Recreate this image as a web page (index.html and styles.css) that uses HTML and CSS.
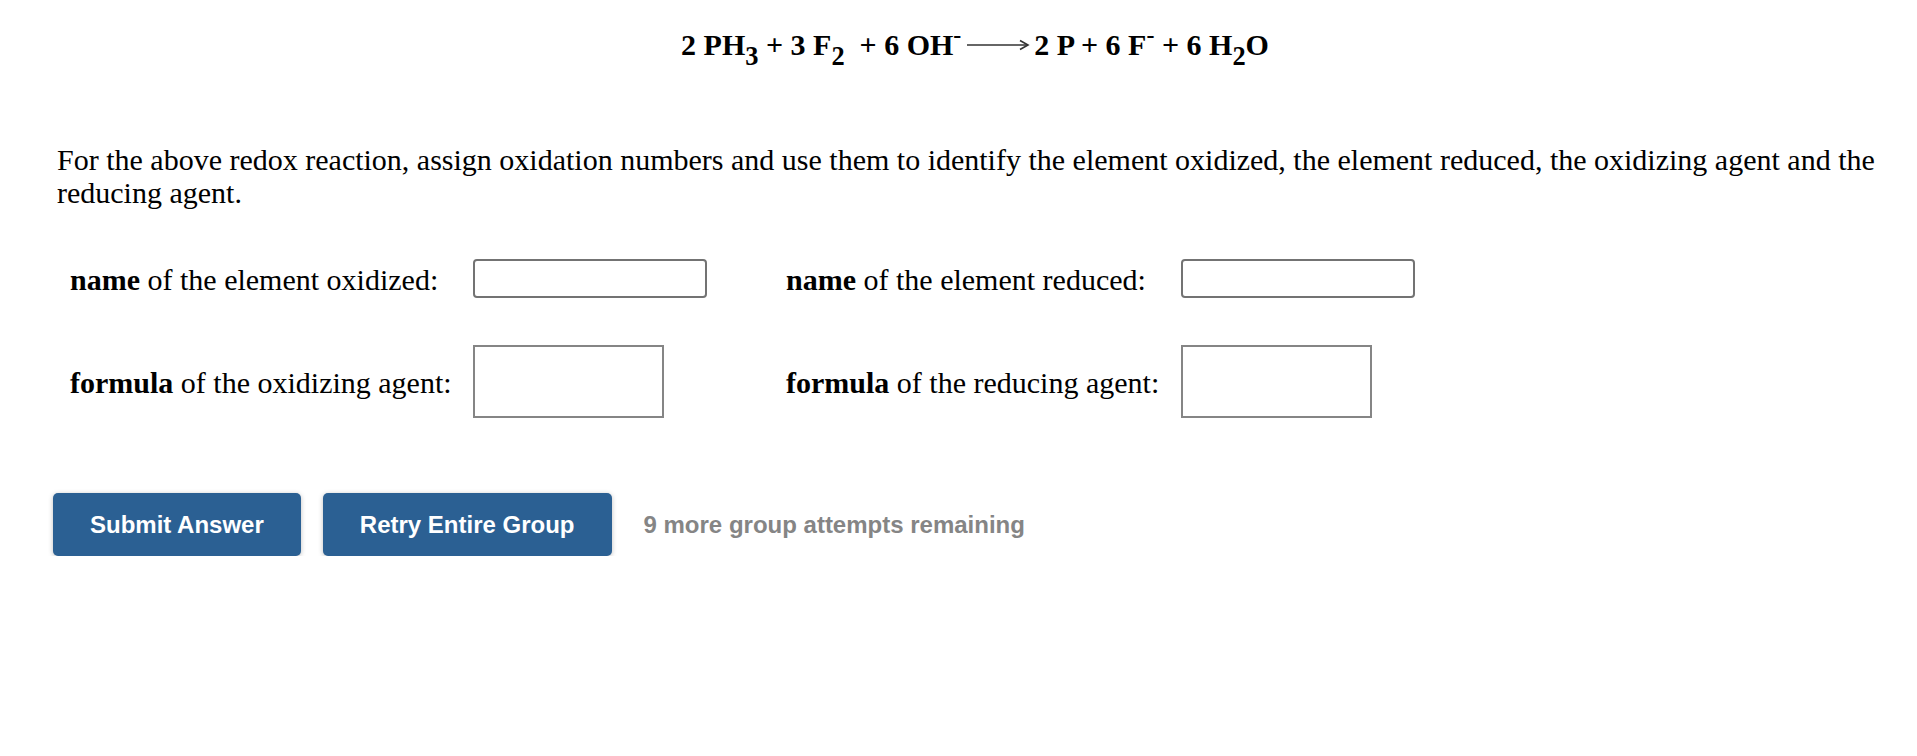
FILE: index.html
```html
<!DOCTYPE html>
<html>
<head>
<meta charset="utf-8">
<link rel="stylesheet" href="styles.css">
</head>
<body>
<div class="page">
  <div class="equation">2 PH<span class="sub">3</span> + 3 F<span class="sub">2</span> &nbsp;+ 6 OH<span class="sup">-</span><svg class="arrow" width="64" height="12" viewBox="0 0 64 12"><line x1="1" y1="6" x2="61" y2="6" stroke="#333" stroke-width="1.6"/><path d="M54 1.5 L62 6 L54 10.5" fill="none" stroke="#333" stroke-width="1.6"/></svg>2 P + 6 F<span class="sup">-</span> + 6 H<span class="sub">2</span>O</div>
  <p class="prompt">For the above redox reaction, assign oxidation numbers and use them to identify the element oxidized, the element reduced, the oxidizing agent and the reducing agent.</p>
  <div class="form">
    <div class="label"><b>name</b> of the element oxidized:</div>
    <div class="cell"><input class="text-input" type="text"></div>
    <div class="label"><b>name</b> of the element reduced:</div>
    <div class="cell"><input class="text-input" type="text"></div>
    <div class="label"><b>formula</b> of the oxidizing agent:</div>
    <div class="cell"><div class="formula-box"></div></div>
    <div class="label"><b>formula</b> of the reducing agent:</div>
    <div class="cell"><div class="formula-box"></div></div>
  </div>
  <div class="actions">
    <button class="btn">Submit Answer</button>
    <button class="btn">Retry Entire Group</button>
    <span class="attempts">9 more group attempts remaining</span>
  </div>
</div>
</body>
</html>
```
FILE: styles.css
```css
html, body {
  margin: 0;
  padding: 0;
  background: #ffffff;
}
.page {
  padding: 28px 40px 0 57px;
  font-family: "Liberation Serif", "Times New Roman", serif;
  color: #000;
}
.equation {
  font-weight: bold;
  font-size: 30px;
  line-height: 34px;
  height: 34px;
  text-align: center;
  padding-left: 16px;
  white-space: nowrap;
}
.sub {
  font-size: 0.88em;
  line-height: 0;
  vertical-align: -0.36em;
}
.sup {
  font-size: 0.8em;
  line-height: 0;
  vertical-align: 0.5em;
}
.arrow {
  display: inline-block;
  vertical-align: 0.12em;
  margin: 0 4px 0 5px;
}
.prompt {
  margin: 81px 0 0 0;
  font-size: 30px;
  line-height: 33px;
}
.form {
  margin: 50px 0 0 13px;
  display: grid;
  grid-template-columns: 403px 313px 395px 234px;
  row-gap: 47px;
  align-items: center;
}
.label {
  font-size: 30px;
  line-height: 34px;
  white-space: nowrap;
  position: relative;
  top: 1px;
}
.cell {
  display: flex;
  align-items: center;
}
.text-input {
  box-sizing: border-box;
  width: 234px;
  height: 39px;
  margin: 0;
  border: 2px solid #737373;
  border-radius: 4px;
  background: #fff;
  padding: 0 8px;
}
.formula-box {
  box-sizing: border-box;
  width: 191px;
  height: 73px;
  border: 2px solid #858585;
  background: #fff;
}
.actions {
  margin: 75px 0 0 -4px;
  display: flex;
  align-items: center;
  gap: 22px;
}
.btn {
  box-sizing: border-box;
  height: 63px;
  padding: 0 37px;
  border: none;
  border-radius: 5px;
  background: #2b6093;
  color: #fff;
  font-family: "Liberation Sans", Arial, sans-serif;
  font-weight: bold;
  font-size: 24px;
  box-shadow: 0 1px 5px rgba(0, 0, 0, 0.25);
}
.attempts {
  margin-left: 10px;
  font-family: "Liberation Sans", Arial, sans-serif;
  font-weight: bold;
  font-size: 24px;
  color: #858585;
}
```
